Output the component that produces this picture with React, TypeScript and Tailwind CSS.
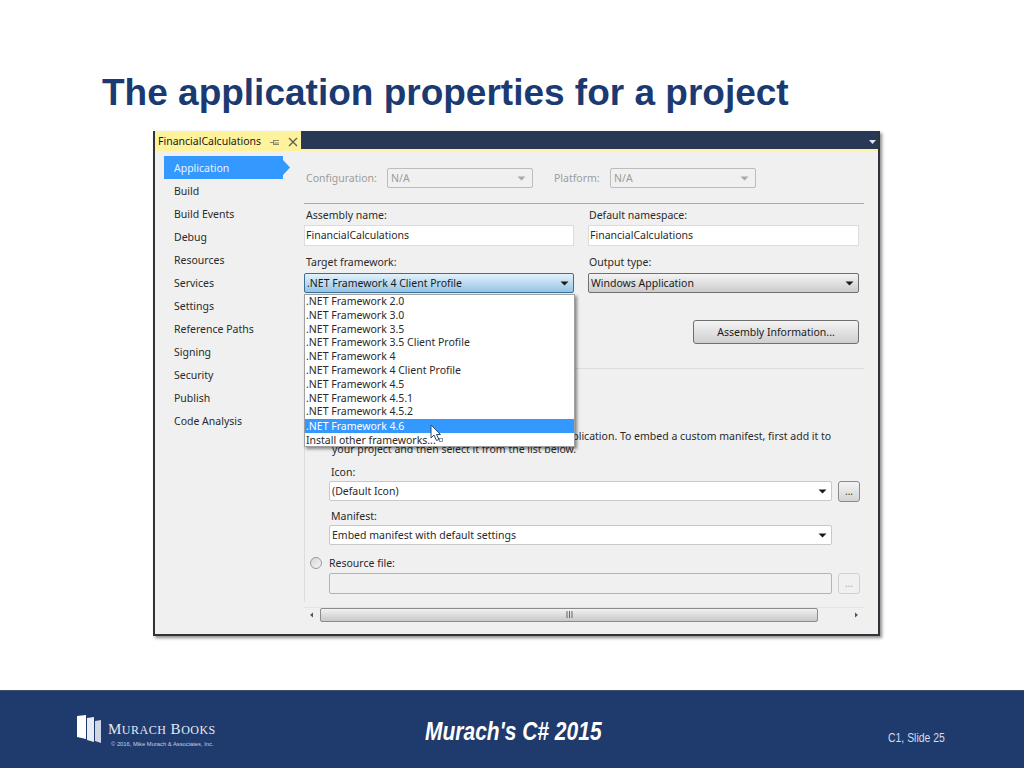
import React from "react";

const nav = ["Build", "Build Events", "Debug", "Resources", "Services", "Settings", "Reference Paths", "Signing", "Security", "Publish", "Code Analysis"];
const frameworks = [".NET Framework 2.0", ".NET Framework 3.0", ".NET Framework 3.5", ".NET Framework 3.5 Client Profile", ".NET Framework 4", ".NET Framework 4 Client Profile", ".NET Framework 4.5", ".NET Framework 4.5.1", ".NET Framework 4.5.2"];

function Caret({ light }: { light?: boolean }) {
  return (
    <svg width="9" height="5" viewBox="0 0 9 5" className="shrink-0">
      <path d="M0.5 0.5H8.5L4.5 4.5Z" fill={light ? "#a8a8a8" : "#1a1a1a"} />
    </svg>
  );
}

function Label({ children, className = "" }: { children: React.ReactNode; className?: string }) {
  return <div className={`h-[16px] leading-[16px] whitespace-nowrap ${className}`}>{children}</div>;
}

function WhiteField({ text, caret }: { text: string; caret?: boolean }) {
  return (
    <div className="h-[20px] flex items-center justify-between bg-white border border-[#c8c8c8] rounded-[2px] pl-[2px] pr-[4px]">
      <span className="whitespace-nowrap pt-[2px]">{text}</span>
      {caret ? <Caret /> : null}
    </div>
  );
}

function DotsButton({ disabled }: { disabled?: boolean }) {
  return (
    <div className={`w-[22px] h-[21px] rounded-[3px] border flex items-center justify-center leading-none pb-[1px] text-[10px] ${disabled ? "border-[#d0d0d0] bg-[#f0f0f0] text-[#a8a8a8]" : "border-[#8a8a8a] bg-gradient-to-b from-[#f4f4f4] to-[#d4d4d4] text-[#333]"}`}>
      ...
    </div>
  );
}

export default function App() {
  return (
    <div className="relative w-[1024px] h-[768px] overflow-hidden bg-white flex flex-col font-['Liberation_Sans',sans-serif]">
      <div className="h-[131px] pl-[102px] pt-[69px]">
        <h1 className="text-[37px] leading-[48px] font-bold text-[#1c3a72] whitespace-nowrap">The application properties for a project</h1>
      </div>

      {/* Window */}
      <div className="ml-[153px] w-[727px] h-[505px] flex flex-col bg-[#f0f0f0] border-2 border-[#30343a] border-t-0 shadow-[2px_2px_3px_rgba(0,0,0,0.45)] text-[10.5px] text-[#2a2a2a] font-['Noto_Sans',sans-serif]">
        <div className="h-[20px] shrink-0 flex items-stretch bg-[#293955] border-b-2 border-[#fff29d]">
          <div className="w-[146px] bg-[#fff29d] flex items-center pl-[3px] pt-[4px] text-[#1a1a1a]">
            <span className="whitespace-nowrap">FinancialCalculations</span>
            <svg width="11" height="9" viewBox="0 0 11 9" className="ml-[8px]">
              <path d="M1 4.5H4.5M4.5 2V7M4.5 2.5H10M4.5 6.5H10M4.5 5H10" stroke="#8a8668" strokeWidth="1" fill="none" />
            </svg>
            <svg width="10" height="10" viewBox="0 0 10 10" className="ml-[8px]">
              <path d="M1 1L9 9M9 1L1 9" stroke="#5c5c50" strokeWidth="1.3" />
            </svg>
          </div>
          <div className="flex-1 flex items-center justify-end pr-[2px] pt-[3px]">
            <svg width="7" height="4" viewBox="0 0 7 4"><path d="M0 0H7L3.5 4Z" fill="#dfe6f0" /></svg>
          </div>
        </div>

        <div className="flex-1 flex">
          {/* Sidebar */}
          <div className="w-[149px] shrink-0 pt-[5px] pl-[9px]">
            <div className="flex items-stretch h-[23px]">
              <div className="w-[119px] bg-[#3399ff] text-[#e8f3ff] leading-[25px] pl-[10px]">Application</div>
              <svg width="7" height="23" viewBox="0 0 7 23"><path d="M0 4L7 11.5L0 19Z" fill="#3399ff" /></svg>
            </div>
            {nav.map((n) => (
              <div key={n} className="h-[23px] leading-[25px] pl-[10px] whitespace-nowrap">{n}</div>
            ))}
          </div>

          {/* Content */}
          <div className="w-[560px] relative">
            <div className="mt-[17px] h-[20px] flex items-center text-[#9c9c9c]">
              <span className="ml-[2px] w-[81px] pt-[2px] whitespace-nowrap">Configuration:</span>
              <div className="w-[146px] h-[20px] flex items-center justify-between border border-[#bcbcbc] rounded-[2px] pl-[3px] pr-[6px]"><span className="pt-[2px]">N/A</span><Caret light /></div>
              <span className="ml-[21px] w-[56px] pt-[2px] whitespace-nowrap">Platform:</span>
              <div className="w-[146px] h-[20px] flex items-center justify-between border border-[#bcbcbc] rounded-[2px] pl-[3px] pr-[6px]"><span className="pt-[2px]">N/A</span><Caret light /></div>
            </div>
            <div className="mt-[15px] h-px bg-[#a8a8a8]" />

            <div className="mt-[3px] grid grid-cols-[270px_271px] gap-x-[14px]">
              <Label className="pl-[2px]">Assembly name:</Label>
              <Label className="pl-[1px]">Default namespace:</Label>
              <div className="mt-[2px] h-[21px] flex items-center bg-white border border-[#dcdcdc] pl-[1px]">FinancialCalculations</div>
              <div className="mt-[2px] h-[21px] flex items-center bg-white border border-[#dcdcdc] pl-[1px]">FinancialCalculations</div>
              <Label className="mt-[8px] pl-[2px]">Target framework:</Label>
              <Label className="mt-[8px] pl-[1px]">Output type:</Label>
              <div className="mt-[3px] h-[20px] flex items-center justify-between rounded-[2px] border border-[#3c6f96] bg-gradient-to-b from-[#e4f2fb] to-[#93c5e6] pl-[2px] pr-[4px] text-[#1a1a1a]">
                <span className="pt-[2px]">.NET Framework 4 Client Profile</span><Caret />
              </div>
              <div className="mt-[3px] h-[20px] flex items-center justify-between rounded-[2px] border border-[#707070] bg-gradient-to-b from-[#f4f4f4] to-[#cccccc] pl-[2px] pr-[4px] text-[#1a1a1a]">
                <span className="pt-[2px]">Windows Application</span><Caret />
              </div>
            </div>

            <div className="mt-[27px] ml-[389px] w-[166px] h-[24px] flex items-center justify-center rounded-[3px] border border-[#707070] bg-gradient-to-b from-[#f4f4f4] to-[#cfcfcf] text-[#1a1a1a] pt-[2px]">
              Assembly Information...
            </div>

            <div className="mt-[24px] h-[234px] border-t border-l border-[#dcdcdc]">
              <div className="mt-[61px] ml-[27px] w-[505px] leading-[13px]">
                A manifest determines specific settings for an application. To embed a custom manifest, first add it to your project and then select it from the list below.
              </div>
              <div className="ml-[24px] w-[531px]">
                <Label className="mt-[8px] pl-[2px]">Icon:</Label>
                <div className="mt-[1px] flex gap-[6px]">
                  <div className="w-[503px]"><WhiteField text="(Default Icon)" caret /></div>
                  <DotsButton />
                </div>
                <Label className="mt-[6px] pl-[2px]">Manifest:</Label>
                <div className="mt-[1px] w-[503px]"><WhiteField text="Embed manifest with default settings" caret /></div>
                <div className="mt-[10px] h-[16px] flex items-center relative">
                  <span className="absolute left-[-19px] top-[2px] w-[12px] h-[12px] rounded-full border border-[#9a9a9a] bg-gradient-to-br from-[#d8d8d8] to-[#f4f4f4]" />
                  <span className="whitespace-nowrap pt-[2px]">Resource file:</span>
                </div>
                <div className="mt-[2px] flex gap-[6px]">
                  <div className="w-[503px] h-[21px] border border-[#b4b4b4] rounded-[2px] bg-[#f0f0f0]" />
                  <DotsButton disabled />
                </div>
              </div>
            </div>

            {/* Scrollbar */}
            <div className="mt-[5px] h-[14px] flex items-center border-t border-[#e4e4e4]">
              <svg width="16" height="14" viewBox="0 0 16 14" className="shrink-0"><path d="M9 4.5V9.5L6 7Z" fill="#555" /></svg>
              <div className="w-[498px] h-[14px] rounded-[2px] border border-[#8c8c8c] bg-gradient-to-b from-[#f2f2f2] to-[#c8c8c8] flex items-center justify-center">
                <svg width="7" height="7" viewBox="0 0 7 7"><path d="M1 0V7M3.5 0V7M6 0V7" stroke="#666" strokeWidth="1" /></svg>
              </div>
              <div className="flex-1 flex justify-end pr-[5px]">
                <svg width="5" height="6" viewBox="0 0 5 6"><path d="M1 0.5V5.5L4 3Z" fill="#555" /></svg>
              </div>
            </div>

            {/* Open dropdown */}
            <div className="absolute left-0 top-[143px] w-[271px] h-[153px] bg-white border border-[#a0a0a0] shadow-[2px_2px_3px_rgba(0,0,0,0.45)] text-[#2a2a2a]">
              {frameworks.map((f) => (
                <div key={f} className="h-[13.8px] leading-[13.8px] pl-[1px] whitespace-nowrap">{f}</div>
              ))}
              <div className="h-[14px] leading-[14px] pl-[1px] bg-[#3399ff] text-white whitespace-nowrap">.NET Framework 4.6</div>
              <div className="h-[14px] leading-[14px] pl-[1px] whitespace-nowrap">Install other frameworks...</div>
            </div>

            {/* Mouse pointer */}
            <svg width="14" height="20" viewBox="0 0 14 20" className="absolute left-[126px] top-[273px]">
              <path d="M1 1V14L4 11L6.5 16.5L9 15.5L6.5 10.5H10.5Z" fill="#fff" stroke="#2b4a70" strokeWidth="1" strokeLinejoin="round" />
              <rect x="9.5" y="14.5" width="3" height="3" fill="none" stroke="#777" strokeWidth="0.8" />
            </svg>
          </div>
        </div>
      </div>

      {/* Footer */}
      <div className="mt-auto h-[78px] bg-[#1f3a6d] border-t border-[#3d4f6e] flex items-start relative text-white">
        <div className="ml-[77px] mt-[24px] w-[150px] flex items-start">
          <svg width="26" height="29" viewBox="0 0 26 29" className="shrink-0">
            <path d="M0 1L9 0V24L0 22Z" fill="#fff" />
            <path d="M10 3L17 2V27L10 25Z" fill="#e8ecf4" />
            <path d="M18 6L24 5V28L18 26Z" fill="#cfd6e6" />
          </svg>
          <div className="ml-[5px] mt-[6px] font-['Liberation_Serif',serif] whitespace-nowrap">
            <div className="text-[15px] leading-[16px] tracking-[0.5px] text-[#e6eaf2]">
              M<span className="text-[12px]">URACH</span> B<span className="text-[12px]">OOKS</span>
            </div>
            <div className="ml-[3px] mt-[2px] text-[5.8px] leading-[8px] text-[#c8d0e0] font-['Liberation_Sans',sans-serif]">© 2016, Mike Murach &amp; Associates, Inc.</div>
          </div>
        </div>
        <div className="absolute left-[425px] top-[24px] text-[25px] leading-[32px] font-bold italic whitespace-nowrap origin-left scale-x-[0.84]">Murach's C# 2015</div>
        <div className="absolute left-[888px] top-[40px] text-[12px] leading-[14px] text-[#d4dcec] whitespace-nowrap origin-left scale-x-[0.87]">C1, Slide 25</div>
      </div>
    </div>
  );
}
